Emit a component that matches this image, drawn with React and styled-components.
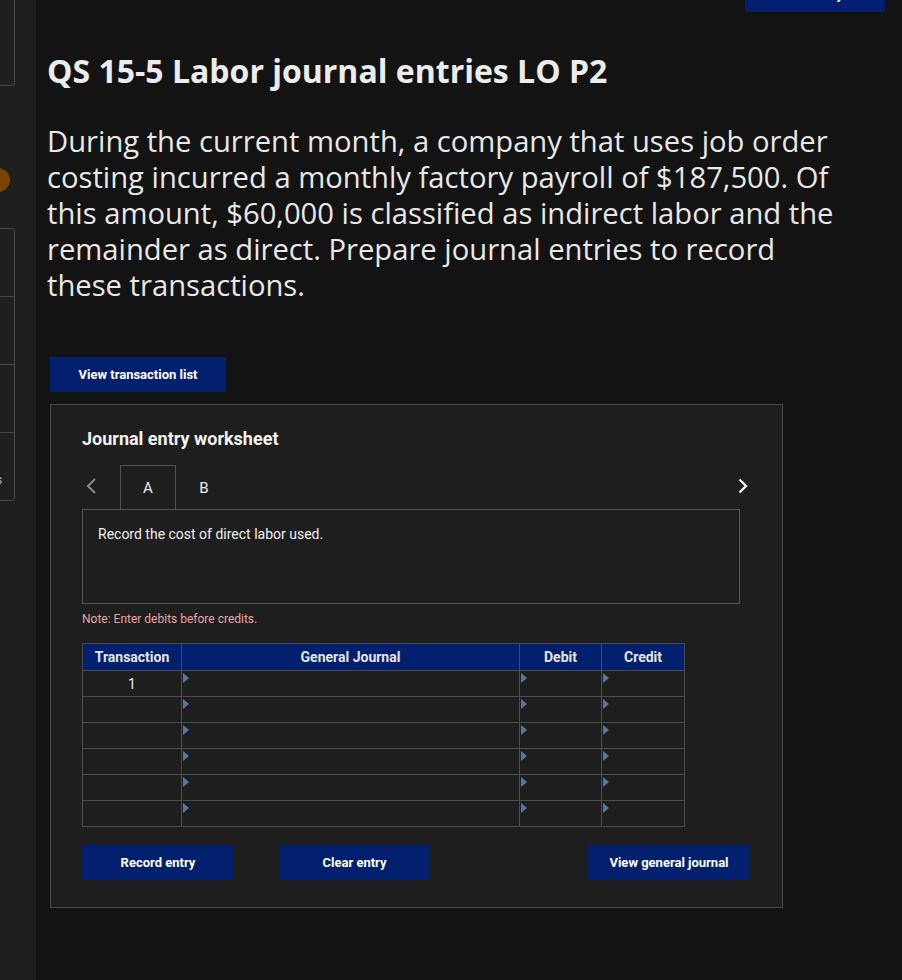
import React from "react";
import styled, { createGlobalStyle } from "styled-components";

const rows = [1, 2, 3, 4, 5, 6];

export default function App() {
  return (
    <>
      <GlobalStyle />
      <Page>
        <Sidebar>
          <SideTop />
          <SideDot />
          <SideGroup>
            <SideItem />
            <SideItem />
            <SideItem />
            <SideItem>
              <SideLabel>s</SideLabel>
            </SideItem>
          </SideGroup>
        </Sidebar>
        <Main>
          <TopBar>
            <TopButton>Summary</TopButton>
          </TopBar>
          <Heading>QS 15-5 Labor journal entries LO P2</Heading>
          <Question>
            During the current month, a company that uses job order
            <br />
            costing incurred a monthly factory payroll of $187,500. Of
            <br />
            this amount, $60,000 is classified as indirect labor and the
            <br />
            remainder as direct. Prepare journal entries to record
            <br />
            these transactions.
          </Question>
          <ListButtonWrap>
            <NavyButton $width={176}>View transaction list</NavyButton>
          </ListButtonWrap>
          <Panel>
            <PanelTitle>Journal entry worksheet</PanelTitle>
            <TabRow>
              <Chevron $muted>
                <svg width="12" height="18" viewBox="0 0 12 18">
                  <path d="M10 2 L3 9 L10 16" fill="none" stroke="currentColor" strokeWidth="2" />
                </svg>
              </Chevron>
              <Tab $active>A</Tab>
              <Tab>B</Tab>
              <Spacer />
              <Chevron>
                <svg width="12" height="18" viewBox="0 0 12 18">
                  <path d="M2.5 2.5 L9 9 L2.5 15.5" fill="none" stroke="currentColor" strokeWidth="2.4" />
                </svg>
              </Chevron>
            </TabRow>
            <Prompt>Record the cost of direct labor used.</Prompt>
            <Note>Note: Enter debits before credits.</Note>
            <Table>
              <thead>
                <tr>
                  <Th $w={98}>Transaction</Th>
                  <Th $w={337}>General Journal</Th>
                  <Th $w={81}>Debit</Th>
                  <Th $w={82}>Credit</Th>
                </tr>
              </thead>
              <tbody>
                {rows.map((r) => (
                  <tr key={r}>
                    <Td>{r === 1 ? "1" : ""}</Td>
                    <Td $marker />
                    <Td $marker />
                    <Td $marker />
                  </tr>
                ))}
              </tbody>
            </Table>
            <ButtonRow>
              <NavyButton $width={152}>Record entry</NavyButton>
              <NavyButton $width={151}>Clear entry</NavyButton>
              <Spacer />
              <NavyButton $width={162}>View general journal</NavyButton>
            </ButtonRow>
          </Panel>
        </Main>
      </Page>
    </>
  );
}

const GlobalStyle = createGlobalStyle`
  body {
    margin: 0;
    background: #131313;
    font-family: Roboto, "Liberation Sans", sans-serif;
  }
`;

const Page = styled.div`
  display: flex;
  min-height: 980px;
  overflow: hidden;
`;

const Sidebar = styled.div`
  width: 36px;
  flex-shrink: 0;
  background: #1f1f1f;
  display: flex;
  flex-direction: column;
`;

const SideTop = styled.div`
  width: 25px;
  height: 86px;
  margin-left: -10px;
  border: 1px solid #474747;
  border-top: none;
  border-bottom-right-radius: 4px;
  box-sizing: border-box;
`;

const SideDot = styled.div`
  width: 24px;
  height: 24px;
  margin: 82px 0 0 -14px;
  border-radius: 50%;
  background: #7d4400;
`;

const SideGroup = styled.div`
  width: 25px;
  margin: 36px 0 0 -10px;
  border: 1px solid #474747;
  border-bottom-right-radius: 4px;
  border-top-right-radius: 4px;
  box-sizing: border-box;
`;

const SideItem = styled.div`
  height: 67px;
  position: relative;
  & + & {
    border-top: 1px solid #474747;
  }
`;

const SideLabel = styled.span`
  position: absolute;
  left: 5px;
  top: 40px;
  font-size: 12px;
  color: #bbb;
`;

const Main = styled.div`
  flex: 1;
  padding-left: 11px;
  display: flex;
  flex-direction: column;
  align-items: flex-start;
`;

const TopBar = styled.div`
  align-self: stretch;
  display: flex;
  justify-content: flex-end;
  padding-right: 17px;
  height: 12px;
  overflow: hidden;
`;

const TopButton = styled.div`
  width: 140px;
  height: 36px;
  margin-top: -24px;
  background: #03206f;
  color: #fff;
  font-weight: 700;
  font-size: 13px;
  display: flex;
  align-items: center;
  justify-content: center;
  border-radius: 0 0 2px 2px;
`;

const Heading = styled.h1`
  margin: 39px 0 0 0;
  font-family: "Open Sans", Lato, sans-serif;
  font-weight: 700;
  font-size: 32px;
  line-height: 40px;
  color: #ececec;
`;

const Question = styled.p`
  margin: 32px 0 0 0;
  font-family: "Open Sans", Lato, sans-serif;
  font-size: 29.2px;
  line-height: 36px;
  color: #e8e8e8;
  white-space: nowrap;
`;

const ListButtonWrap = styled.div`
  margin: 54px 0 0 3px;
`;

const NavyButton = styled.div`
  width: ${(p) => p.$width}px;
  height: 35px;
  flex-shrink: 0;
  background: #03206f;
  color: #fff;
  font-family: Roboto, "Liberation Sans", sans-serif;
  font-weight: 700;
  font-size: 13px;
  display: flex;
  align-items: center;
  justify-content: center;
`;

const Panel = styled.div`
  width: 733px;
  box-sizing: border-box;
  margin: 12px 0 0 3px;
  padding: 22px 42px 27px 31px;
  border: 1px solid #4a4a4a;
  background: #1e1e1e;
`;

const PanelTitle = styled.h2`
  margin: 0;
  font-size: 18px;
  line-height: 24px;
  font-weight: 700;
  color: #f2f2f2;
`;

const TabRow = styled.div`
  display: flex;
  align-items: stretch;
  margin: 14px -9px 0 0;
  height: 44px;
`;

const Chevron = styled.div`
  display: flex;
  align-items: center;
  color: ${(p) => (p.$muted ? "#8a8a8a" : "#f2f2f2")};
  width: ${(p) => (p.$muted ? "38px" : "12px")};
  padding-left: ${(p) => (p.$muted ? "3px" : "0")};
  box-sizing: border-box;
  padding-bottom: 2px;
`;

const Tab = styled.div`
  width: 56px;
  box-sizing: border-box;
  display: flex;
  align-items: center;
  justify-content: center;
  font-size: 15px;
  color: #eee;
  border: 1px solid ${(p) => (p.$active ? "#505050" : "transparent")};
  border-bottom: none;
`;

const Spacer = styled.div`
  flex: 1;
`;

const Prompt = styled.div`
  width: 658px;
  height: 95px;
  box-sizing: border-box;
  border: 1px solid #555;
  padding: 16px 15px;
  font-size: 14px;
  line-height: 17px;
  color: #f0f0f0;
`;

const Note = styled.div`
  margin-top: 8px;
  font-size: 12px;
  line-height: 14px;
  color: #eaa2a2;
`;

const Table = styled.table`
  margin-top: 17px;
  border-collapse: collapse;
  width: 602px;
  table-layout: fixed;
`;

const Th = styled.th`
  width: ${(p) => p.$w}px;
  height: 26px;
  padding: 0;
  background: #03206f;
  border: 1px solid #4a4a4a;
  color: #e4e4e4;
  font-size: 14px;
  font-weight: 700;
`;

const Td = styled.td`
  height: 25px;
  padding: 0;
  border: 1px solid #4d4d4d;
  color: #eee;
  font-size: 14px;
  text-align: center;
  position: relative;
  &::before {
    content: "";
    display: ${(p) => (p.$marker ? "block" : "none")};
    position: absolute;
    left: 1px;
    top: 2px;
    border-left: 6px solid #5777a8;
    border-top: 5px solid transparent;
    border-bottom: 5px solid transparent;
  }
`;

const ButtonRow = styled.div`
  display: flex;
  gap: 45px;
  margin-top: 18px;
  width: 668px;
`;
